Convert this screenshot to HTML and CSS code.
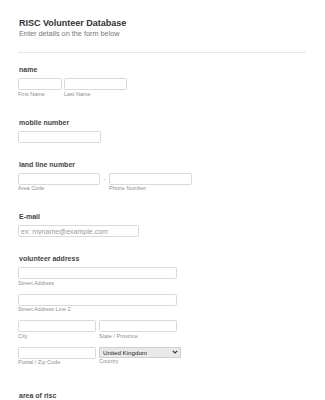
FILE: index.html
```html
<!DOCTYPE html>
<html lang="en">
<head>
  <meta charset="UTF-8">
  <meta name="viewport" content="width=device-width, initial-scale=1.0">
  <title>RISC Volunteer Database</title>
  <link rel="stylesheet" href="styles.css">
</head>
<body>
  <form class="form">
    <div class="form-header">
      <h1>RISC Volunteer Database</h1>
      <div class="subheader">Enter details on the form below</div>
    </div>

    <div class="form-line">
      <label class="form-label">name</label>
      <div class="row">
        <div class="sub">
          <input type="text" class="w-first">
          <span class="sublabel">First Name</span>
        </div>
        <div class="sub">
          <input type="text" class="w-last">
          <span class="sublabel">Last Name</span>
        </div>
      </div>
    </div>

    <div class="form-line">
      <label class="form-label">mobile number</label>
      <input type="text" class="w-mobile">
    </div>

    <div class="form-line">
      <label class="form-label">land line number</label>
      <div class="row">
        <div class="sub">
          <input type="text" class="w-area">
          <span class="sublabel">Area Code</span>
        </div>
        <span class="dash">-</span>
        <div class="sub">
          <input type="text" class="w-phone">
          <span class="sublabel">Phone Number</span>
        </div>
      </div>
    </div>

    <div class="form-line">
      <label class="form-label">E-mail</label>
      <input type="text" class="w-email" placeholder="ex: myname@example.com">
    </div>

    <div class="form-line address">
      <label class="form-label">volunteer address</label>
      <div class="address-grid">
        <div class="sub full">
          <input type="text" class="w-full">
          <span class="sublabel">Street Address</span>
        </div>
        <div class="sub full">
          <input type="text" class="w-full">
          <span class="sublabel">Street Address Line 2</span>
        </div>
        <div class="sub">
          <input type="text" class="w-half">
          <span class="sublabel">City</span>
        </div>
        <div class="sub">
          <input type="text" class="w-half">
          <span class="sublabel">State / Province</span>
        </div>
        <div class="sub">
          <input type="text" class="w-half">
          <span class="sublabel">Postal / Zip Code</span>
        </div>
        <div class="sub">
          <div class="select-wrap">
            <select class="w-country">
              <option>United Kingdom</option>
            </select>
            <svg class="chevron" width="6" height="4" viewBox="0 0 6 4">
              <path d="M0.8 0.8 L3 3 L5.2 0.8" fill="none" stroke="#333" stroke-width="1.1"/>
            </svg>
          </div>
          <span class="sublabel">Country</span>
        </div>
      </div>
    </div>

    <div class="form-line">
      <label class="form-label">area of risc</label>
    </div>
  </form>
</body>
</html>
```

FILE: styles.css
```css
body {
  margin: 0;
  background: #ffffff;
  font-family: "Liberation Sans", Arial, sans-serif;
  color: #333;
}

.form {
  padding: 18px 19px 0 18px;
}

.form-header {
  padding-left: 1px;
  padding-bottom: 14px;
  border-bottom: 1px solid #e8e8e8;
  margin-bottom: 12px;
}

h1 {
  margin: 0;
  font-size: 9px;
  line-height: 11px;
  font-weight: bold;
  color: #2f3338;
}

.subheader {
  font-size: 7.3px;
  line-height: 9px;
  color: #777;
}

.form-line {
  margin-bottom: 17px;
}

.form-label {
  display: block;
  padding-left: 1px;
  margin-bottom: 4px;
  font-size: 7px;
  line-height: 9px;
  font-weight: bold;
  color: #444;
}

.row {
  display: flex;
  gap: 2px;
}

.sub {
  display: flex;
  flex-direction: column;
}

.sublabel {
  display: block;
  margin-top: 0.5px;
  margin-bottom: 3px;
  font-size: 5.5px;
  line-height: 7px;
  color: #8f8f8f;
}

input[type="text"],
select {
  display: block;
  box-sizing: border-box;
  height: 12px;
  margin: 0;
  padding: 0 2px;
  border: 1px solid #d9d9d9;
  border-radius: 1.5px;
  background: #fff;
  font-family: "Liberation Sans", Arial, sans-serif;
  font-size: 7px;
  color: #333;
  outline: none;
}

input::placeholder {
  color: #9a9a9a;
}

.w-first { width: 44px; }
.w-last { width: 63px; }
.w-mobile { width: 83px; }
.w-area { width: 82px; }
.w-phone { width: 83px; }
.w-email { width: 121px; }
.w-full { width: 159px; }
.w-half { width: 78px; }

.dash {
  width: 5px;
  text-align: center;
  font-size: 6px;
  line-height: 12px;
  color: #888;
}

.address-grid {
  display: grid;
  grid-template-columns: 78px auto;
  column-gap: 3px;
  row-gap: 4px;
}

.address-grid .full {
  grid-column: 1 / 3;
}

.address {
  margin-bottom: 22px;
}

.select-wrap {
  position: relative;
  width: 82px;
}

.w-country {
  width: 82px;
  height: 11px;
  padding: 0 3px;
  appearance: none;
  -webkit-appearance: none;
  border-color: #d0d0d0;
  border-radius: 0;
  background-color: #e9e9e9;
  background-image: radial-gradient(#f5f5f5 0.6px, transparent 0.7px);
  background-size: 2px 2px;
  font-size: 6.2px;
  color: #222;
}

.chevron {
  position: absolute;
  right: 3px;
  top: 3.5px;
}
```
